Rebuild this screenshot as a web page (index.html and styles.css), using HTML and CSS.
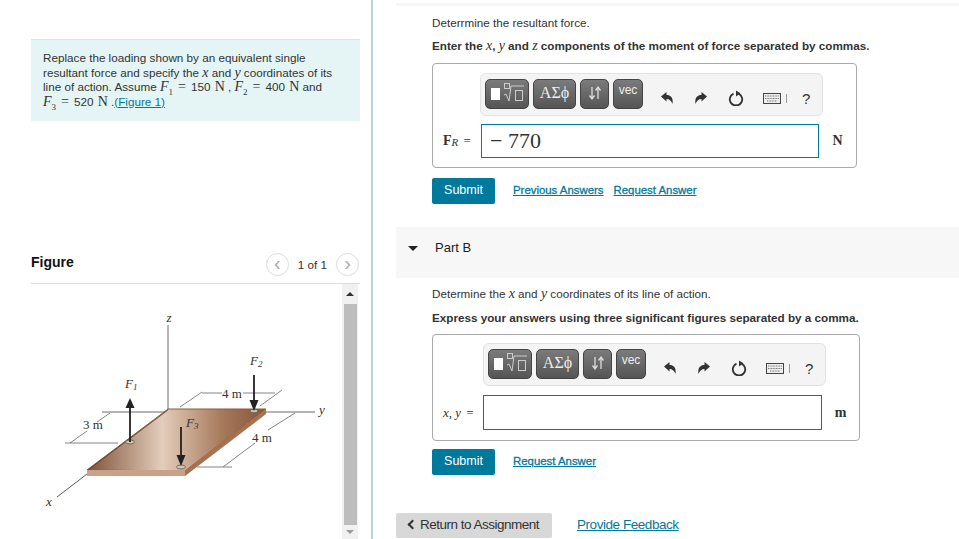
FILE: index.html
```html
<!DOCTYPE html>
<html lang="en">
<head>
    <meta charset="UTF-8">
    <meta name="viewport" content="width=device-width, initial-scale=1.0">
    <title>Part B</title>
    <link rel="stylesheet" href="styles.css">
</head>

<body>
    <!-- Shared toolbar icons -->
    <svg class="defs" width="0" height="0" aria-hidden="true">
        <symbol id="i-root" viewBox="0 0 40 26">
            <rect x="4" y="7" width="9" height="12" fill="#fff"/>
            <rect x="17.500" y="2.500" width="5" height="5" fill="none" stroke="#ccc" stroke-width="1"/>
            <path d="M17 14l2-1 3 7 2-15h13" fill="none" stroke="#ccc" stroke-width="1"/>
            <rect x="28.500" y="9.500" width="7" height="10" fill="none" stroke="#ccc" stroke-width="1"/>
        </symbol>
        <symbol id="i-updown" viewBox="0 0 16 16">
            <path d="M5 2v11M2.500 10.500L5 14l2.500-3.500M11 14V3M8.500 5.500L11 2l2.500 3.500" fill="none" stroke="#ddd" stroke-width="1.300"/>
        </symbol>
        <symbol id="i-undo" viewBox="0 0 14 14">
            <path d="M1 5.500L6.500 1v3C10.500 4 13.500 6.500 12.500 13 11.500 10 9.500 8 6.500 8v2.500z" fill="#333"/>
        </symbol>
        <symbol id="i-redo" viewBox="0 0 14 14">
            <path d="M13 5.500L7.500 1v3C3.500 4 .5 6.500 1.500 13 2.500 10 4.500 8 7.500 8v2.500z" fill="#333"/>
        </symbol>
        <symbol id="i-reset" viewBox="0 0 16 16">
            <path d="M5.500 3.600a6.200 6.200 0 1 0 5 0" fill="none" stroke="#333" stroke-width="1.800"/>
            <path d="M8 .5l4.500 2.800L8 6.500z" fill="#333"/>
        </symbol>
        <symbol id="i-keys" viewBox="0 0 18 11">
            <rect x="0.500" y="0.500" width="17" height="10" fill="#eee" stroke="#444"/>
            <path d="M2 3h14M2 5.500h14M4 8h10" stroke="#777" stroke-width="1.200" stroke-dasharray="1 .6"/>
        </symbol>
    </svg>

    <div class="page">
        <!-- Left column: problem and figure -->
        <aside class="left">
            <div class="intro">
                Replace the loading shown by an equivalent single resultant force and specify the
                <i class="m">x</i> and <i class="m">y</i> coordinates of its line of action. Assume
                <span class="nb"><span class="m"><i>F</i><sub>1</sub><span class="eq">=</span></span>150 <span class="m unit-n">N</span></span> ,
                <span class="nb"><span class="m"><i>F</i><sub>2</sub><span class="eq">=</span></span>400 <span class="m unit-n">N</span></span> and
                <span class="nb"><span class="m"><i>F</i><sub>3</sub><span class="eq">=</span></span>520 <span class="m unit-n">N</span></span> .<a href="#">(Figure 1)</a>
            </div>

            <div class="figure-head">
                <h2>Figure</h2>
                <div class="pager">
                    <span class="pager-btn">&lsaquo;</span>
                    <span class="pager-text">1 of 1</span>
                    <span class="pager-btn">&rsaquo;</span>
                </div>
            </div>

            <div class="figure-body">
                <svg class="plate" viewBox="31 284 311 255" width="311" height="255">
                    <defs>
                        <linearGradient id="plate-top" x1="0" y1="0" x2="1" y2="0">
                            <stop offset="0" stop-color="#7f5238"/>
                            <stop offset="0.420" stop-color="#e3cdbb"/>
                            <stop offset="0.750" stop-color="#a87a5c"/>
                            <stop offset="1" stop-color="#84553a"/>
                        </linearGradient>
                    </defs>
                    <g fill="none" stroke="#666" stroke-width="0.800">
                        <path d="M168 325V409" stroke="#444"/>
                        <path d="M102 412H168M266 412H315" stroke="#444"/>
                        <path d="M87 474L57 497" stroke="#333"/>
                        <path d="M65 443H118"/>
                        <path d="M110 413L97 422M87 431L70 443"/>
                        <path d="M180 407L202 392M260 406L282 390"/>
                        <path d="M202 393H222M243 393H275"/>
                        <path d="M295 413L268 430M255 443L223 467M197 467H232"/>
                    </g>
                    <path d="M87 470L168 409H266L185 471z" fill="url(#plate-top)" stroke="#8a5a3c" stroke-width="1"/>
                    <path d="M87 470H185V476H87z" fill="#c9a088"/>
                    <path d="M185 471L266 409V414L185 476z" fill="#a5714f"/>
                    <path d="M88 470L168 410" fill="none" stroke="#5a3a28" stroke-width="0.800"/>
                    <g fill="#d8c3b0" stroke="#555" stroke-width="0.800">
                        <ellipse cx="130" cy="442" rx="4.500" ry="2"/>
                        <ellipse cx="254" cy="411" rx="4" ry="1.800"/>
                        <ellipse cx="181" cy="467" rx="4.500" ry="2"/>
                    </g>
                    <g stroke="#222" stroke-width="1.800">
                        <path d="M130 442V404M254 375V403M181 427V458"/>
                    </g>
                    <g fill="#222">
                        <path d="M130 398L134.500 408H125.500z"/>
                        <path d="M254 411L249.500 400H258.500z"/>
                        <path d="M181 466L176.500 455H185.500z"/>
                    </g>
                    <g class="fig-label">
                        <text x="169" y="322" text-anchor="middle" font-style="italic">z</text>
                        <text x="322" y="414" text-anchor="middle" font-style="italic">y</text>
                        <text x="49" y="506" text-anchor="middle" font-style="italic">x</text>
                        <text x="125" y="388" font-style="italic">F<tspan class="fig-sub" dy="2">1</tspan></text>
                        <text x="250" y="365" font-style="italic">F<tspan class="fig-sub" dy="2">2</tspan></text>
                        <text x="186" y="427" font-style="italic">F<tspan class="fig-sub" dy="2">3</tspan></text>
                        <text x="93" y="429" text-anchor="middle">3 m</text>
                        <text x="232" y="398" text-anchor="middle">4 m</text>
                        <text x="262" y="442" text-anchor="middle">4 m</text>
                    </g>
                </svg>
                <div class="scrollbar">
                    <span class="arrow-up"></span>
                    <div class="thumb"></div>
                    <span class="arrow-down"></span>
                </div>
            </div>
        </aside>

        <!-- Right column: answers -->
        <main class="right">
            <div class="section part-a">
                <p class="line">Deterrmine the resultant force.</p>
                <p class="line strong">Enter the <i class="m">x</i>, <i class="m">y</i> and <i class="m">z</i> components of the moment of force separated by commas.</p>

                <div class="answer-box">
                    <div class="toolbar">
                        <span class="tool tool-root"><svg width="40" height="26"><use href="#i-root"/></svg></span>
                        <span class="tool tool-greek">&Alpha;&Sigma;&#981;</span>
                        <span class="tool tool-arrows"><svg width="16" height="16"><use href="#i-updown"/></svg></span>
                        <span class="tool tool-vec">vec</span>
                        <span class="actions">
                            <svg width="14" height="14"><use href="#i-undo"/></svg>
                            <svg width="14" height="14"><use href="#i-redo"/></svg>
                            <svg width="16" height="16"><use href="#i-reset"/></svg>
                            <span class="keys"><svg width="18" height="11"><use href="#i-keys"/></svg><span class="bar"></span></span>
                            <span class="help">?</span>
                        </span>
                    </div>
                    <div class="input-row">
                        <span class="input-label"><b>F</b><i class="sub-r">R</i> <span class="label-eq">=</span></span>
                        <div class="input input-filled">&minus; 770</div>
                        <span class="unit">N</span>
                    </div>
                </div>

                <div class="submit-row">
                    <button type="button" class="submit">Submit</button>
                    <a href="#" class="action-link">Previous Answers</a>
                    <a href="#" class="action-link">Request Answer</a>
                </div>
            </div>

            <div class="part-head"><span class="caret"></span>Part B</div>

            <div class="section part-b">
                <p class="line">Determine the <i class="m">x</i> and <i class="m">y</i> coordinates of its line of action.</p>
                <p class="line strong">Express your answers using three significant figures separated by a comma.</p>

                <div class="answer-box box-b">
                    <div class="toolbar">
                        <span class="tool tool-root"><svg width="40" height="26"><use href="#i-root"/></svg></span>
                        <span class="tool tool-greek">&Alpha;&Sigma;&#981;</span>
                        <span class="tool tool-arrows"><svg width="16" height="16"><use href="#i-updown"/></svg></span>
                        <span class="tool tool-vec">vec</span>
                        <span class="actions">
                            <svg width="14" height="14"><use href="#i-undo"/></svg>
                            <svg width="14" height="14"><use href="#i-redo"/></svg>
                            <svg width="16" height="16"><use href="#i-reset"/></svg>
                            <span class="keys"><svg width="18" height="11"><use href="#i-keys"/></svg><span class="bar"></span></span>
                            <span class="help">?</span>
                        </span>
                    </div>
                    <div class="input-row">
                        <span class="input-label"><i>x</i>, <i>y</i> <span class="label-eq">=</span></span>
                        <div class="input"></div>
                        <span class="unit unit-m">m</span>
                    </div>
                </div>

                <div class="submit-row">
                    <button type="button" class="submit">Submit</button>
                    <a href="#" class="action-link">Request Answer</a>
                </div>
            </div>

            <div class="footer">
                <a href="#" class="return"><span class="chev"></span>Return to Assignment</a>
                <a href="#" class="feedback">Provide Feedback</a>
            </div>
        </main>
    </div>
</body>
</html>
```

FILE: styles.css
```css
/* Global Styles */
* {
    margin: 0;
    padding: 0;
    box-sizing: border-box;
}

html, body {
    height: 539px;
    overflow: hidden;
}

body {
    font-family: 'Liberation Sans', Arial, sans-serif;
    font-size: 11.700px;
    color: #333;
    background: #fff;
}

a {
    color: #007a9c;
}

.defs {
    position: absolute;
}

.page {
    display: flex;
    height: 539px;
}

.m {
    font-family: 'Liberation Serif', serif;
    font-size: 14px;
}

.m sub {
    font-size: 9px;
    line-height: 0;
}

.nb {
    white-space: nowrap;
}

.eq {
    margin: 0 5px;
}

.unit-n {
    margin-left: 1px;
}

/* Left column */
.left {
    width: 373px;
    height: 539px;
    flex: none;
    padding: 39px 11px 0 31px;
    border-right: 2px solid #bcd0e2;
}

.intro {
    height: 82px;
    padding: 11px 12px 0;
    line-height: 14.500px;
    background: #e5f5f6;
    border-top: 1px solid #d9e6e8;
}

.figure-head {
    display: flex;
    justify-content: space-between;
    align-items: center;
    height: 41px;
    margin-top: 121px;
    padding-top: 2px;
}

.figure-head h2 {
    font-size: 14px;
    color: #111;
    margin-bottom: 4px;
}

.pager {
    display: flex;
    align-items: center;
    gap: 9px;
    margin: 2px 1px 0 0;
    font-size: 11.700px;
}

.pager-btn {
    width: 23px;
    height: 23px;
    border: 1px solid #ddd;
    border-radius: 50%;
    color: #aaa;
    font-size: 20px;
    line-height: 18px;
    text-align: center;
}

.figure-body {
    display: flex;
    height: 256px;
    border-top: 1px solid #ddd;
}

.plate {
    flex: none;
    width: 311px;
}

.scrollbar {
    width: 16px;
    height: 255px;
    display: flex;
    flex-direction: column;
    align-items: center;
    background: #f1f1f1;
}

.thumb {
    flex-grow: 1;
    width: 13px;
    background: #bdbdbd;
    margin: 8px 0 5px;
}

.arrow-up, .arrow-down {
    width: 0;
    height: 0;
    border-left: 4px solid transparent;
    border-right: 4px solid transparent;
}

.arrow-up {
    margin-top: 8px;
    border-bottom: 4px solid #333;
}

.arrow-down {
    margin-bottom: 5px;
    border-top: 4px solid #999;
}

/* Right column */
.right {
    flex-grow: 1;
    min-width: 0;
}

.section {
    margin-left: 23px;
    padding-left: 36px;
}

.part-a {
    height: 224px;
    margin-top: 3px;
    padding-top: 10px;
    border-top: 3px solid #f7f7f7;
}

.part-b {
    padding-top: 9px;
}

.line {
    line-height: 14px;
    margin-bottom: 9px;
}

.part-b .line {
    margin-bottom: 10px;
}

.part-b .strong {
    margin-bottom: 9px;
}

.strong {
    font-weight: bold;
    color: #333;
}

.strong .m {
    font-weight: normal;
}

.answer-box {
    width: 425px;
    height: 105px;
    margin-top: 10px;
    padding: 9px 0 0 47px;
    border: 1px solid #aaa;
    border-radius: 4px;
}

.box-b {
    width: 428px;
    height: 107px;
    margin-top: 8px;
    padding: 8px 0 0 50px;
}

.toolbar {
    display: flex;
    align-items: flex-start;
    gap: 4px;
    width: 343px;
    height: 43px;
    padding: 5px 0 0 4px;
    background: #f4f4f4;
    border: 1px solid #e2e2e2;
    border-radius: 6px;
}

.tool {
    display: flex;
    align-items: center;
    justify-content: center;
    height: 30px;
    color: #eee;
    background: linear-gradient(#7b7b7b, #555);
    border: 1px solid #444;
    border-radius: 5px;
}

.tool-root {
    width: 44px;
}

.tool-greek {
    width: 43px;
    font-family: 'Liberation Serif', serif;
    font-size: 16px;
    padding-bottom: 3px;
}

.tool-arrows {
    width: 29px;
    padding-bottom: 3px;
}

.tool-vec {
    width: 30px;
    font-size: 12px;
    padding-bottom: 8px;
}

.actions {
    display: flex;
    align-items: center;
    flex-grow: 1;
    gap: 20px;
    height: 30px;
    padding: 8px 0 0 13px;
    color: #333;
}

.keys {
    display: flex;
    align-items: center;
    gap: 5px;
    margin-left: -1px;
}

.bar {
    width: 1px;
    height: 9px;
    background: #999;
}

.help {
    font-size: 15px;
    margin-left: -5px;
}

.input-row {
    display: flex;
    align-items: center;
    margin-top: 8px;
    margin-left: -37px;
}

.input-label {
    width: 38px;
    flex: none;
    font-family: 'Liberation Serif', serif;
    font-size: 13px;
    white-space: nowrap;
}

.input-label b {
    font-size: 14px;
}

.label-eq {
    margin-left: 2px;
}

.sub-r {
    font-size: 11px;
    vertical-align: -1px;
}

.input {
    width: 338px;
    height: 34px;
    flex: none;
    border: 1px solid #007a9c;
    font-family: 'Liberation Serif', serif;
    font-size: 22px;
    line-height: 32px;
    padding-left: 8px;
    background: #fff;
}

.unit {
    flex-grow: 1;
    text-align: center;
    font-family: 'Liberation Serif', serif;
    font-size: 14px;
    font-weight: bold;
}

.box-b .input-row {
    margin-top: 9px;
    margin-left: -40px;
}

.box-b .input-label {
    width: 40px;
}

.box-b .input {
    width: 339px;
    height: 35px;
}

.submit-row {
    display: flex;
    align-items: center;
    margin-top: 10px;
}

.part-b .submit-row {
    margin-top: 8px;
}

.submit {
    width: 63px;
    height: 26px;
    margin-right: 18px;
    font-family: 'Liberation Sans', Arial, sans-serif;
    font-size: 12.500px;
    color: #fff;
    background: #007a9c;
    border: none;
    border-radius: 2px;
    padding-bottom: 3px;
}

.action-link {
    font-size: 11.400px;
    -webkit-text-stroke: 0.300px #007a9c;
    margin-right: 10px;
    margin-top: -2px;
}

/* Part B header band */
.part-head {
    display: flex;
    align-items: flex-start;
    height: 51px;
    margin-left: 23px;
    padding-top: 13px;
    font-size: 13px;
    color: #222;
    background: #f7f7f7;
}

.caret {
    width: 0;
    height: 0;
    margin: 6px 17px 0 12px;
    border-left: 5px solid transparent;
    border-right: 5px solid transparent;
    border-top: 5px solid #222;
}

/* Footer links */
.footer {
    display: flex;
    align-items: center;
    margin: 38px 0 0 23px;
}

.return {
    display: flex;
    align-items: center;
    flex: none;
    width: 156px;
    height: 25px;
    padding: 0 0 3px 13px;
    font-size: 13.500px;
    letter-spacing: -0.500px;
    color: #333;
    text-decoration: none;
    background: #d8d8d8;
    border-radius: 2px;
}

.chev {
    width: 7px;
    height: 7px;
    margin-right: 4px;
    border-left: 2px solid #333;
    border-bottom: 2px solid #333;
    transform: rotate(45deg);
}

.feedback {
    margin-left: 25px;
    margin-bottom: 2px;
    font-size: 13.500px;
    letter-spacing: -0.450px;
}

/* Figure labels */
.fig-label text {
    font-family: 'Liberation Serif', serif;
    font-size: 13px;
    fill: #333;
}

.fig-sub {
    font-size: 9px;
}
```
